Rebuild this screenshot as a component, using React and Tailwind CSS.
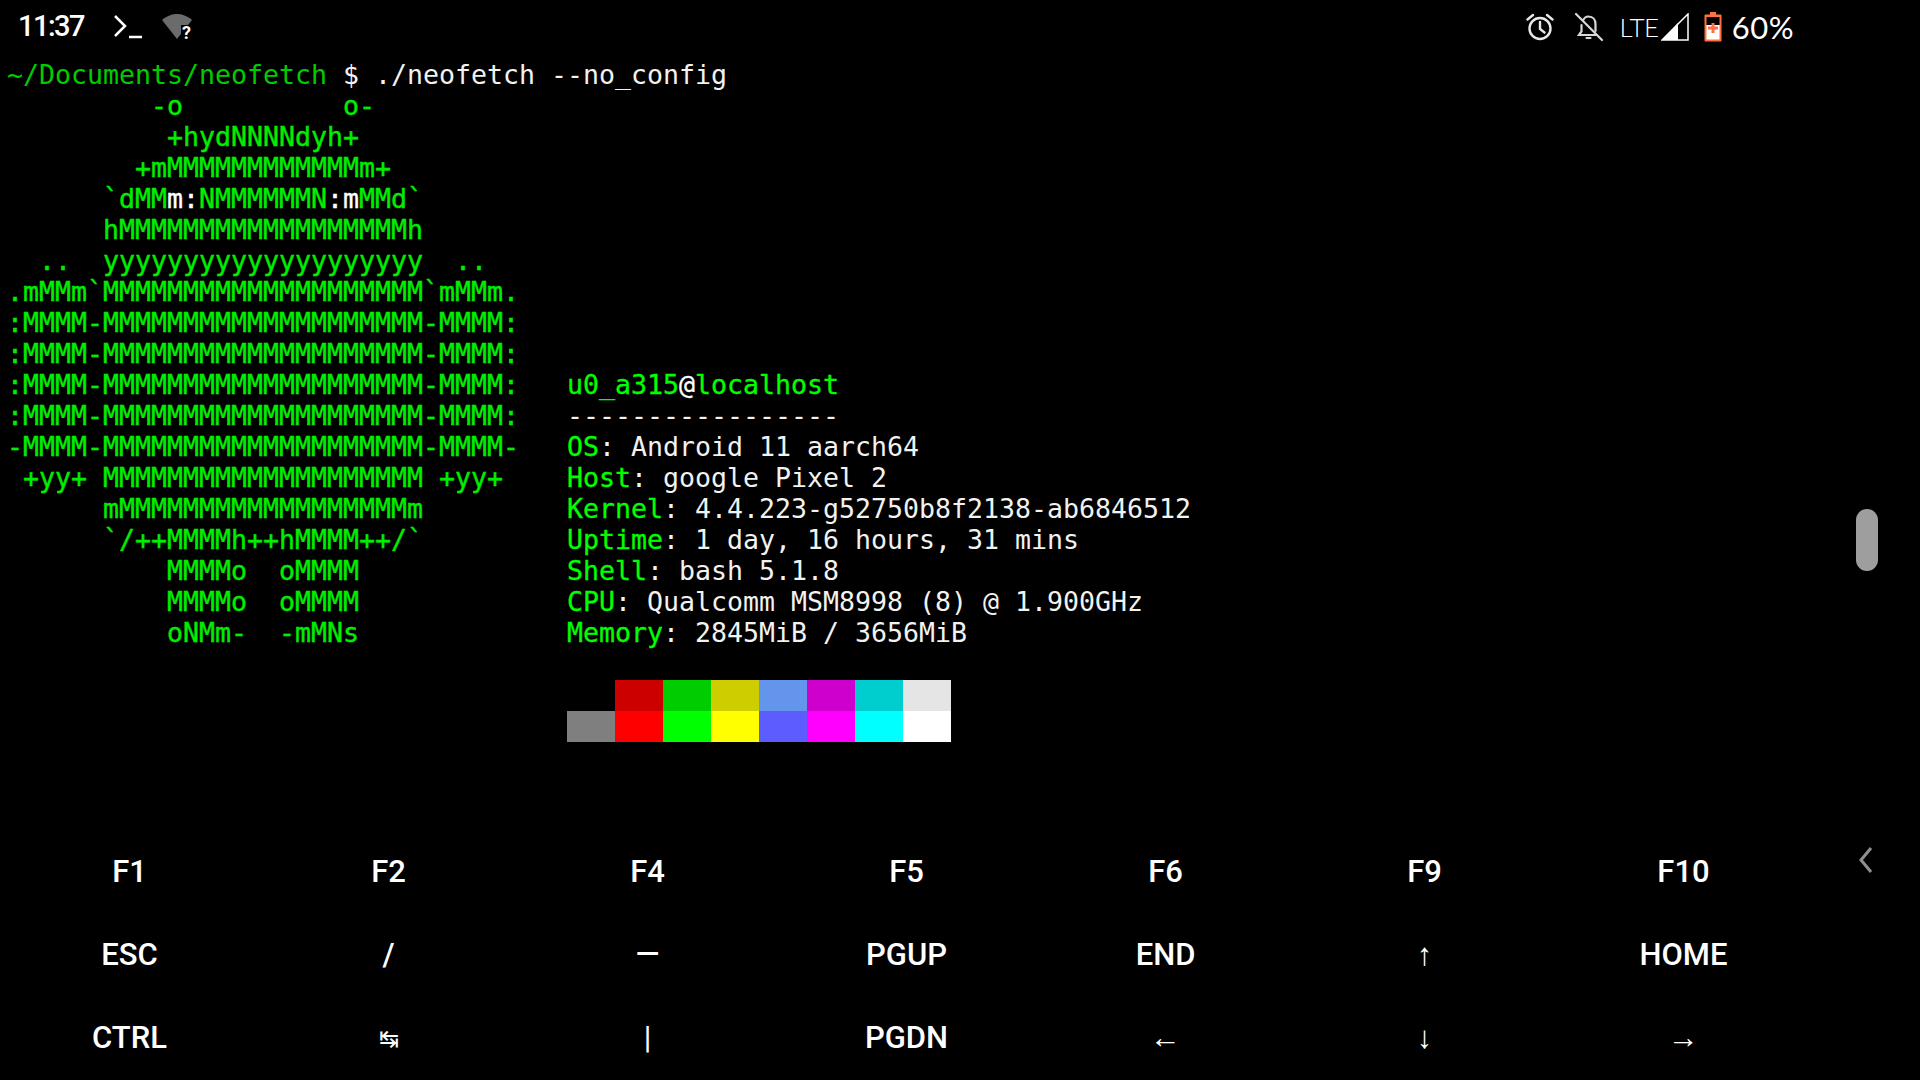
const M20 = 'MMMMMMMMMMMMMMMMMMMM';

const asciiRows = [
  '         -o          o-',
  '          +hydNNNNdyh+',
  '        +mMMMMMMMMMMMMm+',
  null,
  '      hMMMMMMMMMMMMMMMMMMh',
  '  ..  yyyyyyyyyyyyyyyyyyyy  ..',
  `.mMMm\`${M20}\`mMMm.`,
  `:MMMM-${M20}-MMMM:`,
  `:MMMM-${M20}-MMMM:`,
  `:MMMM-${M20}-MMMM:`,
  `:MMMM-${M20}-MMMM:`,
  `-MMMM-${M20}-MMMM-`,
  ` +yy+ ${M20} +yy+`,
  '      mMMMMMMMMMMMMMMMMMMm',
  '      `/++MMMMh++hMMMM++/`',
  '          MMMMo  oMMMM',
  '          MMMMo  oMMMM',
  '          oNMm-  -mMNs',
];

const infoRows = [
  ['OS', 'Android 11 aarch64'],
  ['Host', 'google Pixel 2'],
  ['Kernel', '4.4.223-g52750b8f2138-ab6846512'],
  ['Uptime', '1 day, 16 hours, 31 mins'],
  ['Shell', 'bash 5.1.8'],
  ['CPU', 'Qualcomm MSM8998 (8) @ 1.900GHz'],
  ['Memory', '2845MiB / 3656MiB'],
];

const keyRows = [
  ['F1', 'F2', 'F4', 'F5', 'F6', 'F9', 'F10'],
  ['ESC', '/', '―', 'PGUP', 'END', '↑', 'HOME'],
  ['CTRL', '↹', '|', 'PGDN', '←', '↓', '→'],
];

const thinKeys = ['↑', '↓', '←', '→', '|'];

const dimColors = ['bg-black', 'bg-[#cd0000]', 'bg-[#00cd00]', 'bg-[#cdcd00]', 'bg-[#6495ed]', 'bg-[#cd00cd]', 'bg-[#00cdcd]', 'bg-[#e5e5e5]'];
const brightColors = ['bg-[#7f7f7f]', 'bg-[#ff0000]', 'bg-[#00ff00]', 'bg-[#ffff00]', 'bg-[#5c5cff]', 'bg-[#ff00ff]', 'bg-[#00ffff]', 'bg-white'];

function StatusLeft() {
  return (
    <div className="flex items-center">
      <span className="ml-[18px] w-[68px] font-['Roboto',sans-serif] text-[29px] font-medium tracking-[-1.5px] text-white">11:37</span>
      <svg className="ml-[27px]" width="30" height="26" viewBox="0 0 30 26" fill="none" stroke="#fff" strokeWidth="2.5">
        <path d="M2 2l10 10L2 22" />
        <path d="M16 23h13" />
      </svg>
      <svg className="ml-[18px]" width="34" height="34" viewBox="0 -3 34 34">
        <path d="M1 7C7 2 12 1 16 1s9 1 15 6L16 26z" fill="#6b6b6b" />
        <rect x="20" y="12" width="12" height="16" fill="#000" />
        <text x="21" y="26" fontFamily="Roboto, sans-serif" fontSize="18" fontWeight="700" fill="#fff">?</text>
      </svg>
    </div>
  );
}

function StatusRight() {
  return (
    <div className="flex items-center text-white">
      <svg width="30" height="30" viewBox="0 0 30 30" fill="none" stroke="#e8e8e8" strokeWidth="2.4" strokeLinecap="round">
        <circle cx="15" cy="16.5" r="10.5" />
        <path d="M15 10v7l4.5 3.5" />
        <path d="M2.5 7.5L8 3M27.5 7.5L22 3" />
      </svg>
      <svg className="ml-[19px]" width="30" height="30" viewBox="0 0 30 30" fill="none" stroke="#d8d8d8" strokeWidth="2.2" strokeLinecap="round">
        <path d="M9 8.5C10 6 12 4.5 14.5 4.5c4.500 0 7 3.500 7 7.500v7" />
        <path d="M7.500 13v6.500L5 23h17" />
        <path d="M12.500 26h4" />
        <path d="M2 2l26 26" />
      </svg>
      <span className="ml-[15px] font-['Lato',sans-serif] text-[26px] leading-none font-light tracking-[-0.5px]">LTE</span>
      <svg className="ml-[2px]" width="28" height="28" viewBox="0 0 28 28">
        <path d="M27 1v26H1z" fill="none" stroke="#fff" strokeWidth="1.500" />
        <path d="M17 10v17H1z" fill="#fff" />
      </svg>
      <svg className="ml-[15px]" width="18" height="30" viewBox="0 0 18 30">
        <path d="M6 0h6v2.500h4.500a1 1 0 0 1 1 1V28.500a1 1 0 0 1-1 1H1.500a1 1 0 0 1-1-1V3.500a1 1 0 0 1 1-1H6z" fill="#ff7043" />
        <rect x="2.500" y="5" width="13" height="8" fill="#000" />
        <rect x="2.500" y="13" width="13" height="14.500" fill="#fff" />
        <path d="M7.500 11h3v3.500H14v3h-3.500V21h-3v-3.500H4v-3h3.500z" fill="#ff7043" />
      </svg>
      <span className="ml-[10px] font-['Lato',sans-serif] text-[31px] leading-none font-normal tracking-[0.5px]">60%</span>
    </div>
  );
}

function Logo() {
  return (
    <div className="w-[560px] text-[#00ee00] [-webkit-text-stroke:0.4px]">
      {asciiRows.map((row, i) =>
        row === null ? (
          <div key={i} className="h-[31px]">
            {'      `dMM'}
            <span className="text-white">m:</span>
            NMMMMMMN
            <span className="text-white">:m</span>
            {'MMd`'}
          </div>
        ) : (
          <div key={i} className="h-[31px]">{row}</div>
        )
      )}
    </div>
  );
}

function Info() {
  return (
    <div className="mt-[279px]">
      <div className="h-[31px] text-[#00ff00] [-webkit-text-stroke:0.3px]">
        u0_a315<span className="text-white">@</span>localhost
      </div>
      <div className="h-[31px]">-----------------</div>
      {infoRows.map(([label, value]) => (
        <div key={label} className="h-[31px]">
          <span className="text-[#00ff00] [-webkit-text-stroke:0.3px]">{label}</span>: {value}
        </div>
      ))}
      <div className="mt-[32px] flex">
        {dimColors.map((c) => (
          <div key={c} className={`h-[31px] w-12 ${c}`} />
        ))}
      </div>
      <div className="flex">
        {brightColors.map((c) => (
          <div key={c} className={`h-[31px] w-12 ${c}`} />
        ))}
      </div>
    </div>
  );
}

export default function App() {
  return (
    <div className="relative flex h-[1080px] w-[1920px] flex-col overflow-hidden bg-black">
      <div className="flex h-[59px] shrink-0 items-center justify-between pr-[126px] pb-[5px]">
        <StatusLeft />
        <StatusRight />
      </div>

      <div className="flex-1 whitespace-pre pl-[7px] font-['DejaVu_Sans_Mono',monospace] text-[26.58px] leading-[31px] text-[#f2f2f2]">
        <div className="h-[31px]">
          <span className="text-[#00cd00]">~/Documents/neofetch</span> $ ./neofetch --no_config
        </div>
        <div className="flex">
          <Logo />
          <Info />
        </div>
      </div>

      <div className="flex h-[250px] shrink-0">
        <div className="grid w-[1813px] grid-cols-7 grid-rows-3 pt-[1px] font-['Roboto',sans-serif] text-[31px] font-medium text-white">
          {keyRows.flat().map((key) => (
            <div
              key={key}
              className={
                key === '↹'
                  ? 'flex items-center justify-center text-[24px] font-normal'
                  : thinKeys.includes(key)
                    ? 'flex items-center justify-center font-normal'
                    : 'flex items-center justify-center'
              }
            >
              {key}
            </div>
          ))}
        </div>
        <svg className="ml-[44px] mt-[16px]" width="18" height="28" viewBox="0 0 18 28" fill="none" stroke="#8f8f8f" strokeWidth="3">
          <path d="M14 2L4 14l10 12" />
        </svg>
      </div>

      <div className="absolute top-[509px] left-[1856px] h-[62px] w-[22px] rounded-full bg-[#9e9e9e]" />
    </div>
  );
}
